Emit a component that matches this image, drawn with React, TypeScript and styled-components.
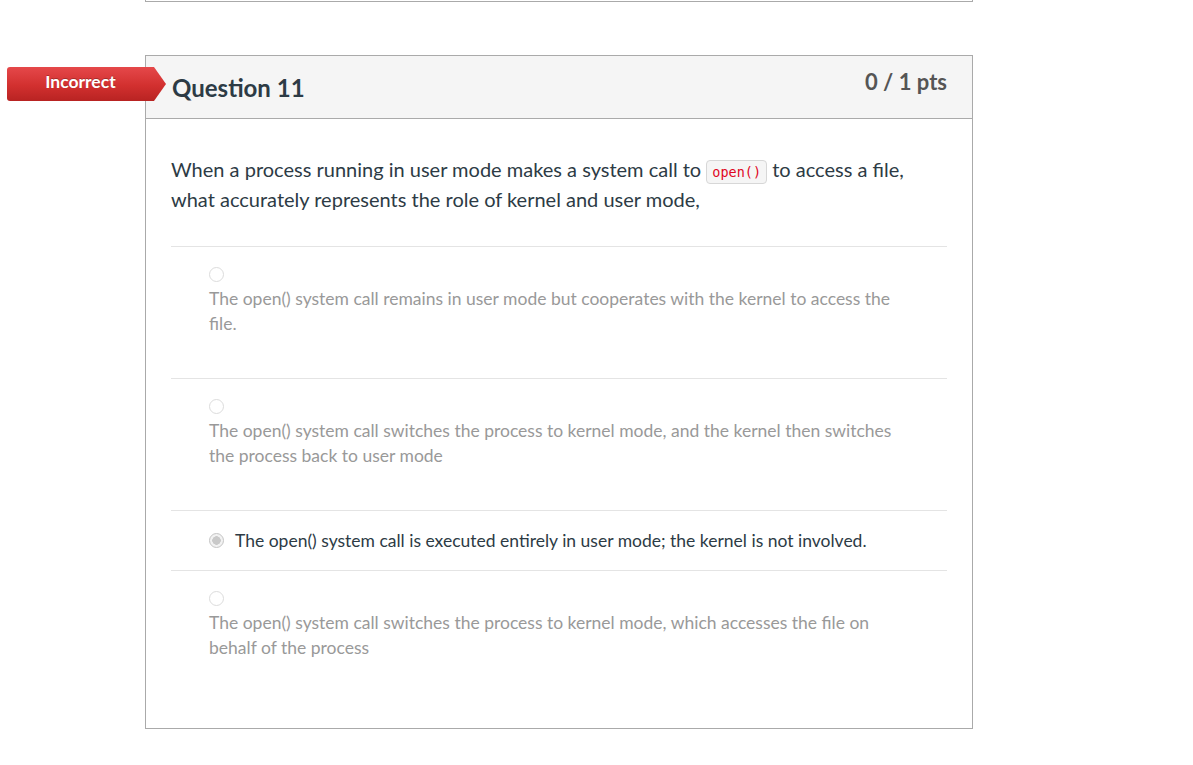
import React from "react";
import styled, { createGlobalStyle } from "styled-components";

const GlobalStyle = createGlobalStyle`
  body {
    margin: 0;
    background: #ffffff;
    font-family: Lato, "Noto Sans", "Liberation Sans", sans-serif;
    color: #2d3b45;
  }
`;

const Page = styled.div`
  display: flex;
  flex-direction: column;
  padding-left: 145px;
  width: 828px;
`;

const PrevCard = styled.div`
  height: 1px;
  border: 1px solid #aaaaaa;
  border-top: none;
  margin-bottom: 53px;
`;

const Card = styled.div`
  position: relative;
  border: 1px solid #aaaaaa;
  background: #fff;
`;

const Badge = styled.div`
  position: absolute;
  left: -139px;
  top: 11px;
  width: 159px;
  height: 34px;
  display: flex;
  align-items: center;
  justify-content: center;
  padding-right: 12px;
  box-sizing: border-box;
  background: linear-gradient(to bottom, #e5484a 0%, #d2302f 55%, #b82322 100%);
  border-radius: 3px 0 0 3px;
  clip-path: polygon(0 0, calc(100% - 12px) 0, 100% 50%, calc(100% - 12px) 100%, 0 100%);
  color: #ffffff;
  font-weight: 700;
  font-size: 17.5px;
  line-height: 22px;
  padding-bottom: 4px;
  text-shadow: 0 -1px 0 rgba(0, 0, 0, 0.25);
`;

const Header = styled.div`
  height: 62px;
  display: flex;
  justify-content: space-between;
  align-items: flex-start;
  padding: 0 25px 0 26px;
  background: #f5f5f5;
  border-bottom: 1px solid #aaaaaa;
`;

const Title = styled.h2`
  margin: 0;
  padding-top: 17px;
  font-size: 24px;
  line-height: 30px;
  font-weight: 700;
  color: #2d3b45;
`;

const Points = styled.div`
  padding-top: 12px;
  font-size: 22px;
  line-height: 28px;
  font-weight: 700;
  color: #555555;
`;

const Body = styled.div`
  padding: 35px 25px 68px 25px;
`;

const QuestionText = styled.p`
  margin: 0 0 32px 0;
  font-size: 20px;
  line-height: 30px;
  color: #2d3b45;
`;

const Code = styled.code`
  display: inline-block;
  font-family: "DejaVu Sans Mono", "Liberation Mono", monospace;
  font-size: 13.5px;
  line-height: 20px;
  padding: 1px 5px;
  color: #e0061f;
  background: #f5f5f5;
  border: 1px solid #d7d7d7;
  border-radius: 4px;
`;

const Answers = styled.div`
  display: flex;
  flex-direction: column;
`;

const Answer = styled.div<{ $selected?: boolean }>`
  border-top: 1px solid #e4e4e4;
  display: flex;
  flex-direction: ${(p) => (p.$selected ? "row" : "column")};
  align-items: ${(p) => (p.$selected ? "center" : "flex-start")};
  gap: ${(p) => (p.$selected ? "11px" : "4px")};
  padding: ${(p) => (p.$selected ? "17px 38px" : "20px 38px 42px 38px")};
  &:last-child {
    padding-bottom: 0;
  }
`;

const Radio = styled.span<{ $checked?: boolean }>`
  width: 15px;
  height: 15px;
  border-radius: 50%;
  box-sizing: border-box;
  border: 1px solid ${(p) => (p.$checked ? "#c4c4c4" : "#dcdcdc")};
  background: ${(p) =>
    p.$checked
      ? "radial-gradient(circle, #c9c9c9 0 4px, #f2f2f2 4.5px)"
      : "#ffffff"};
  flex-shrink: 0;
`;

const AnswerText = styled.div<{ $selected?: boolean }>`
  max-width: 700px;
  font-size: 17.5px;
  line-height: 25px;
  color: ${(p) => (p.$selected ? "#2d3b45" : "#999999")};
`;

const answers = [
  "The open() system call remains in user mode but cooperates with the kernel to access the file.",
  "The open() system call switches the process to kernel mode, and the kernel then switches the process back to user mode",
  "The open() system call is executed entirely in user mode; the kernel is not involved.",
  "The open() system call switches the process to kernel mode, which accesses the file on behalf of the process",
];

const selected = 2;

export default function App() {
  return (
    <>
      <GlobalStyle />
      <Page>
        <PrevCard />
        <Card>
          <Badge>Incorrect</Badge>
          <Header>
            <Title>Question 11</Title>
            <Points>0 / 1 pts</Points>
          </Header>
          <Body>
            <QuestionText>
              When a process running in user mode makes a system call to{" "}
              <Code>open()</Code> to access a file, what accurately represents
              the role of kernel and user mode,
            </QuestionText>
            <Answers>
              {answers.map((a, i) => (
                <Answer key={i} $selected={i === selected}>
                  <Radio $checked={i === selected} />
                  <AnswerText $selected={i === selected}>{a}</AnswerText>
                </Answer>
              ))}
            </Answers>
          </Body>
        </Card>
      </Page>
    </>
  );
}
